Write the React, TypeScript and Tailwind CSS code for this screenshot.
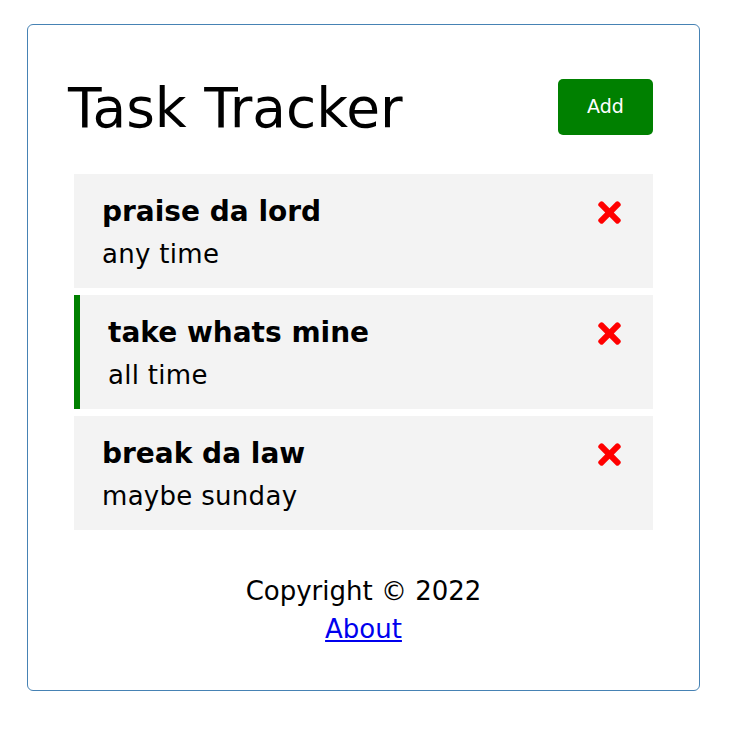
import { FaTimes } from "react-icons/fa";

type Task = { id: number; text: string; day: string; reminder: boolean };

const tasks: Task[] = [
  { id: 1, text: "praise da lord", day: "any time", reminder: false },
  { id: 2, text: "take whats mine", day: "all time", reminder: true },
  { id: 3, text: "break da law", day: "maybe sunday", reminder: false },
];

function TaskItem({ task }: { task: Task }) {
  return (
    <div
      className={
        task.reminder
          ? "bg-[#f3f3f3] border-l-[6px] border-[#008000] pl-[28px] pr-[27px] pt-[15px] pb-[15px]"
          : "bg-[#f3f3f3] pl-[28px] pr-[27px] pt-[15px] pb-[15px]"
      }
    >
      <h3 className="flex items-center justify-between text-[28px] leading-[46px] font-semibold">
        {task.text}
        <FaTimes className="text-[#ff0000]" size={33} />
      </h3>
      <p className="text-[26px] leading-[38px] tracking-[0.3px]">{task.day}</p>
    </div>
  );
}

export default function App() {
  return (
    <div className="bg-white min-h-[745px] pt-[24px] font-['DejaVu_Sans',sans-serif] text-black">
      <div className="ml-[27px] w-[673px] h-[667px] border border-[#4682b4] rounded-[6px] px-[40px] pt-[14px]">
        <header className="flex items-center justify-between h-[135px]">
          <h1 className="text-[55px] font-normal leading-[64px] pt-[3px]">Task Tracker</h1>
          <button className="bg-[#008000] text-white text-[19px] rounded-[5px] w-[95px] h-[56px] mr-[6px]">
            Add
          </button>
        </header>
        <div className="flex flex-col gap-[7px] px-[6px]">
          {tasks.map((t) => (
            <TaskItem key={t.id} task={t} />
          ))}
        </div>
        <footer className="mt-[42px] text-center text-[26px] leading-[38px]">
          <p>Copyright © 2022</p>
          <a href="#" className="text-[#0000ee] underline">
            About
          </a>
        </footer>
      </div>
    </div>
  );
}
